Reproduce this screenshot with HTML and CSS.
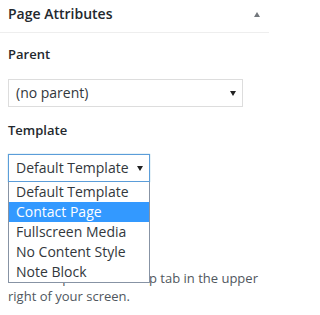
FILE: index.html
```html
<!DOCTYPE html>
<html>
<head>
<meta charset="utf-8">
<link rel="stylesheet" href="styles.css">
</head>
<body>
<div class="box">
  <div class="box-head">
    <h2 class="box-title">Page Attributes</h2>
    <span class="toggle"></span>
  </div>
  <div class="box-body">
    <p class="label label-parent">Parent</p>
    <div class="select select-wide">
      <span class="select-text">(no parent)</span>
      <span class="arrow"></span>
    </div>
    <p class="label label-template">Template</p>
    <div class="select-wrap">
      <div class="select select-narrow is-open">
        <span class="select-text">Default Template</span>
        <span class="arrow"></span>
      </div>
      <ul class="options">
        <li class="option">Default Template</li>
        <li class="option is-hover">Contact Page</li>
        <li class="option">Fullscreen Media</li>
        <li class="option">No Content Style</li>
        <li class="option">Note Block</li>
      </ul>
    </div>
    <p class="help">Need help? Use the Help tab in the upper right of your screen.</p>
  </div>
</div>
</body>
</html>
```

FILE: styles.css
```css
html, body {
  margin: 0;
  padding: 0;
  background: #ffffff;
}
body {
  font-family: "Open Sans", "Liberation Sans", sans-serif;
  color: #23282d;
  width: 269px;
  height: 315px;
  overflow: hidden;
}
.box {
  background: #ffffff;
}
.box-head {
  display: flex;
  align-items: flex-start;
  justify-content: space-between;
  border-bottom: 1px solid #eeeeee;
  padding: 0 9px 0 8px;
  box-sizing: border-box;
  height: 33px;
}
.box-title {
  margin: 0;
  padding-top: 4px;
  font-size: 14px;
  line-height: 20px;
  font-weight: 600;
  color: #23282d;
}
.toggle {
  width: 0;
  height: 0;
  margin-top: 12px;
  border-left: 3.5px solid transparent;
  border-right: 3.5px solid transparent;
  border-bottom: 5px solid #72777c;
}
.box-body {
  padding: 0 8px;
}
.label {
  margin: 0;
  font-size: 13px;
  line-height: 18px;
  font-weight: 600;
  color: #23282d;
}
.label-parent {
  margin-top: 12px;
}
.label-template {
  margin-top: 14px;
}
.select {
  display: flex;
  align-items: center;
  justify-content: space-between;
  box-sizing: border-box;
  height: 28px;
  border: 1px solid #dddddd;
  background: #ffffff;
  padding: 0 6px 0 7px;
  font-size: 14px;
  color: #32373c;
}
.select-wide {
  width: 235px;
  margin-top: 16px;
}
.select-wrap {
  position: relative;
  margin-top: 15px;
  width: 142px;
}
.select-narrow {
  width: 142px;
  border-color: #5b9dd9;
  box-shadow: 0 0 1px rgba(30, 140, 190, 0.6);
  padding-right: 6px;
}
.select-text {
  line-height: 26px;
}
.arrow {
  width: 0;
  height: 0;
  border-left: 3px solid transparent;
  border-right: 3px solid transparent;
  border-top: 5px solid #222222;
  margin-top: 1px;
}
.options {
  position: absolute;
  top: 28px;
  left: 0;
  width: 142px;
  box-sizing: border-box;
  margin: 0;
  padding: 0;
  list-style: none;
  background: #ffffff;
  border: 1px solid #8793a4;
  border-top: none;
  z-index: 2;
}
.option {
  height: 20px;
  line-height: 20px;
  padding-left: 7px;
  font-size: 14px;
  color: #32373c;
  white-space: nowrap;
}
.option.is-hover {
  background: #3399ff;
  color: #ffffff;
}
.help {
  margin: 87px 0 0;
  font-size: 13px;
  line-height: 18px;
  color: #50575e;
}
```
